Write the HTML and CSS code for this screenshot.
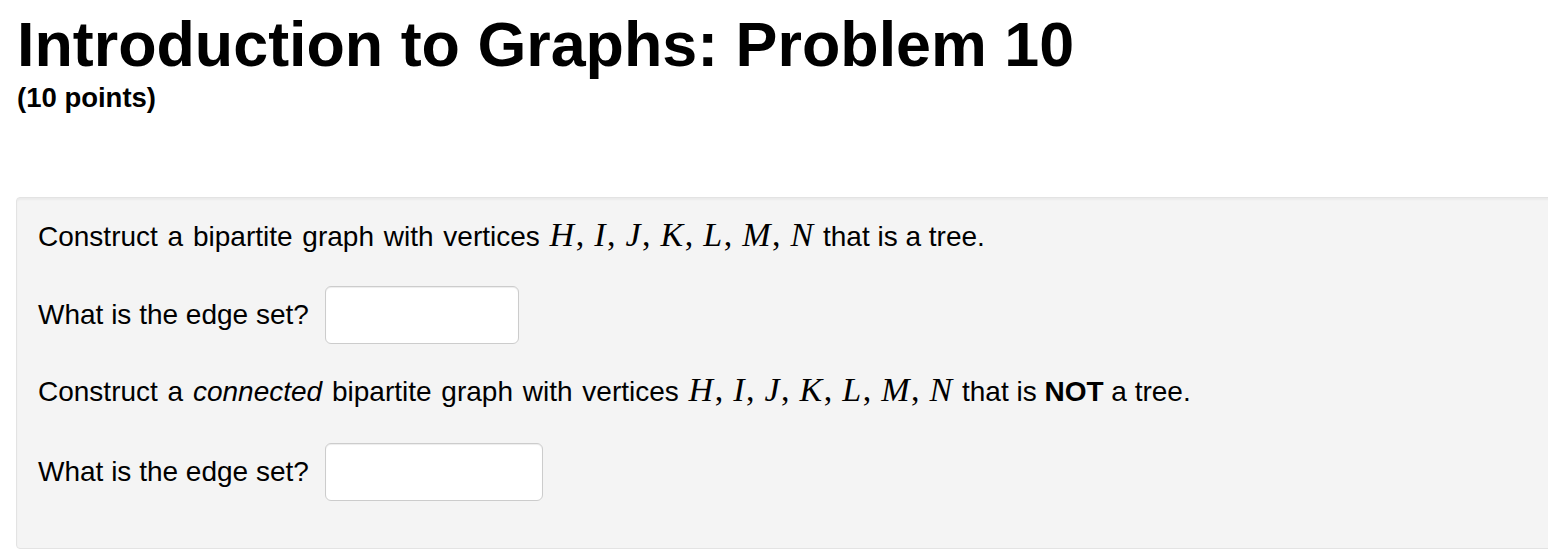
FILE: index.html
```html
<!DOCTYPE html>
<html lang="en">
<head>
<meta charset="utf-8">
<title>Introduction to Graphs: Problem 10</title>
<link rel="stylesheet" href="styles.css">
</head>
<body>
  <header class="problem-header">
    <h1 class="problem-title">Introduction to Graphs: Problem 10</h1>
    <div class="problem-points">(10 points)</div>
  </header>

  <div class="well">
    <p class="line"><span class="lead">Construct a bipartite graph with vertices</span> <span class="math"><var>H</var><span class="sep">,</span><var>I</var><span class="sep">,</span><var>J</var><span class="sep">,</span><var>K</var><span class="sep">,</span><var>L</var><span class="sep">,</span><var>M</var><span class="sep">,</span><var>N</var></span> that is a tree.</p>

    <div class="answer-row answer-row-1">
      <label class="answer-label" for="ans1">What is the edge set?</label>
      <input class="answer-input input-short" id="ans1" type="text">
    </div>

    <p class="line line-3"><span class="lead">Construct a <em>connected</em> bipartite graph with vertices</span> <span class="math"><var>H</var><span class="sep">,</span><var>I</var><span class="sep">,</span><var>J</var><span class="sep">,</span><var>K</var><span class="sep">,</span><var>L</var><span class="sep">,</span><var>M</var><span class="sep">,</span><var>N</var></span> that is <strong>NOT</strong> a tree.</p>

    <div class="answer-row answer-row-2">
      <label class="answer-label" for="ans2">What is the edge set?</label>
      <input class="answer-input input-long" id="ans2" type="text">
    </div>
  </div>
</body>
</html>
```

FILE: styles.css
```css
html, body {
  overflow: hidden;
}

body {
  margin: 8px 0 0 16px;
  font-family: "Liberation Sans", Arial, Helvetica, sans-serif;
  color: #000;
  background: #fff;
}

.problem-header {
  padding-left: 1px;
}

.problem-title {
  margin: 2px 0 0;
  font-size: 62.8px;
  line-height: 68px;
  font-weight: bold;
}

.problem-points {
  margin-top: 2px;
  font-size: 27.5px;
  line-height: 36px;
  font-weight: bold;
}

.well {
  margin-top: 81px;
  margin-right: -60px;
  padding: 19px 21px 19px 21px;
  background: #f4f4f4;
  border: 1px solid #e3e3e3;
  border-radius: 4px;
  box-shadow: inset 0 2px 2px rgba(0, 0, 0, 0.04);
  font-size: 28px;
  line-height: 40px;
}

.line {
  margin: 0;
}

.line-3 {
  margin-top: 28px;
}

.lead {
  word-spacing: 2px;
}

.math {
  font-family: "Liberation Serif", "Times New Roman", serif;
  font-size: 34px;
  line-height: 1;
  padding-left: 2px;
}

.math var {
  font-style: italic;
  padding-right: 1.5px;
}

.math var:last-child {
  padding-right: 2px;
}

.math .sep {
  margin-right: 10px;
}

.answer-row {
  display: flex;
  align-items: center;
  gap: 16px;
}

.answer-row-1 {
  margin-top: 29px;
}

.answer-row-2 {
  margin-top: 31px;
  margin-bottom: 28px;
}

.answer-input {
  box-sizing: border-box;
  height: 58px;
  padding: 4px 12px;
  background: #fff;
  border: 1px solid #cccccc;
  border-radius: 6px;
  box-shadow: inset 0 1px 1px rgba(0, 0, 0, 0.075);
  font-size: 28px;
  font-family: inherit;
}

.input-short {
  width: 194px;
}

.input-long {
  width: 218px;
}
```
